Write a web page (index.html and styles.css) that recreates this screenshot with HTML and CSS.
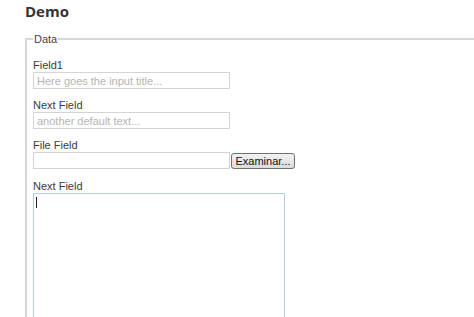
FILE: index.html
```html
<!DOCTYPE html>
<html lang="en">
<head>
  <meta charset="UTF-8">
  <title>Demo</title>
  <link rel="stylesheet" href="styles.css">
</head>
<body>
<h1>Demo</h1>

<form class="demo-form">
  <fieldset>
    <legend>Data</legend>

    <div class="field">
      <label for="field1">Field1</label>
      <input type="text" id="field1" placeholder="Here goes the input title...">
    </div>

    <div class="field">
      <label for="field2">Next Field</label>
      <input type="text" id="field2" placeholder="another default text...">
    </div>

    <!-- file field drawn by hand so the button reads "Examinar..." -->
    <div class="field">
      <label for="fileName">File Field</label>
      <div class="file-row">
        <input type="text" id="fileName" readonly>
        <button type="button" class="browse-btn">Examinar...</button>
      </div>
    </div>

    <div class="field field-last">
      <label for="field3">Next Field</label>
      <div class="area-wrap">
        <textarea id="field3"></textarea>
        <span class="caret"></span>
      </div>
    </div>
  </fieldset>
</form>
</body>
</html>
```

FILE: styles.css
```css
body {
  margin: 0;
  padding: 0 0 0 25px;
  font-family: "Liberation Sans", Arial, sans-serif;
  background: #fff;
  color: #444;
}

h1 {
  margin: 0;
  padding-top: 1px;
  font-family: "Open Sans", sans-serif;
  font-size: 15px;
  font-weight: 700;
  color: #333;
  line-height: 20px;
}

.demo-form {
  margin-top: 12px;
}

fieldset {
  margin: 0;
  padding: 13px 0 0 6px;
  border: 2px solid #d6d6d6;
  border-right: none;
  border-bottom: none;
}

legend {
  padding: 0 1px;
  font-size: 11px;
  color: #444;
}

.field {
  margin-bottom: 9px;
}

.field-last {
  padding-top: 1px;
}

.field label {
  display: block;
  font-size: 11px;
  line-height: 14px;
  color: #3a3a3a;
}

.field input[type="text"] {
  display: block;
  box-sizing: border-box;
  width: 197px;
  height: 17px;
  margin: 0;
  padding: 0 3px;
  border: 1px solid #d4d4d4;
  font-family: "Liberation Sans", Arial, sans-serif;
  font-size: 11px;
  color: #333;
  outline: none;
}

.field input::placeholder {
  color: #b4b4b4;
}

.file-row {
  display: flex;
  align-items: center;
  gap: 1px;
}

.browse-btn {
  box-sizing: border-box;
  width: 64px;
  height: 16px;
  padding: 0;
  border: 1px solid #707070;
  border-radius: 3px;
  background: linear-gradient(#f2f2f2, #dcdcdc);
  font-family: "Liberation Sans", Arial, sans-serif;
  font-size: 11px;
  color: #111;
  line-height: 14px;
}

.area-wrap {
  position: relative;
  width: 252px;
}

textarea {
  display: block;
  box-sizing: border-box;
  width: 252px;
  height: 140px;
  margin: 0;
  border: 1px solid #b4cde3;
  resize: none;
  outline: none;
}

.caret {
  position: absolute;
  left: 3px;
  top: 4px;
  width: 1px;
  height: 11px;
  background: #222;
}
```
